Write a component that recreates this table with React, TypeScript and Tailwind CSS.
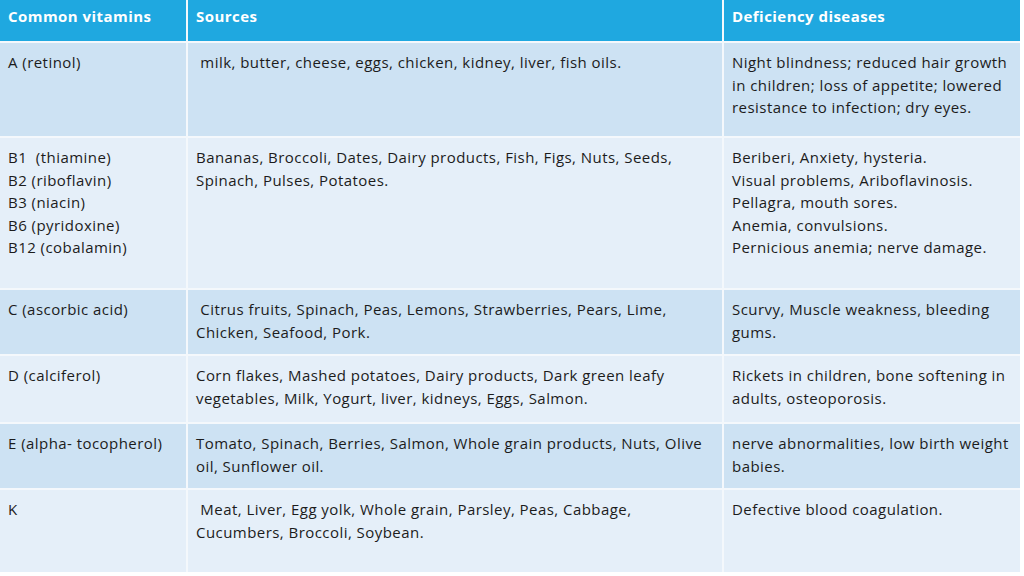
import React from 'react';

type Row = {
  vitamin: string[];
  sources: string[];
  diseases: string[];
  tone: 'dark' | 'light';
};

const rows: Row[] = [
  {
    vitamin: ['A (retinol)'],
    sources: [' milk, butter, cheese, eggs, chicken, kidney, liver, fish oils.'],
    diseases: [
      'Night blindness; reduced hair growth',
      'in children; loss of appetite; lowered',
      'resistance to infection; dry eyes.',
    ],
    tone: 'dark',
  },
  {
    vitamin: ['B1  (thiamine)', 'B2 (riboflavin)', 'B3 (niacin)', 'B6 (pyridoxine)', 'B12 (cobalamin)'],
    sources: ['Bananas, Broccoli, Dates, Dairy products, Fish, Figs, Nuts, Seeds,', 'Spinach, Pulses, Potatoes.'],
    diseases: [
      'Beriberi, Anxiety, hysteria.',
      'Visual problems, Ariboflavinosis.',
      'Pellagra, mouth sores.',
      'Anemia, convulsions.',
      'Pernicious anemia; nerve damage.',
    ],
    tone: 'light',
  },
  {
    vitamin: ['C (ascorbic acid)'],
    sources: [' Citrus fruits, Spinach, Peas, Lemons, Strawberries, Pears, Lime,', 'Chicken, Seafood, Pork.'],
    diseases: ['Scurvy, Muscle weakness, bleeding', 'gums.'],
    tone: 'dark',
  },
  {
    vitamin: ['D (calciferol)'],
    sources: ['Corn flakes, Mashed potatoes, Dairy products, Dark green leafy', 'vegetables, Milk, Yogurt, liver, kidneys, Eggs, Salmon.'],
    diseases: ['Rickets in children, bone softening in', 'adults, osteoporosis.'],
    tone: 'light',
  },
  {
    vitamin: ['E (alpha- tocopherol)'],
    sources: ['Tomato, Spinach, Berries, Salmon, Whole grain products, Nuts, Olive', 'oil, Sunflower oil.'],
    diseases: ['nerve abnormalities, low birth weight', 'babies.'],
    tone: 'dark',
  },
  {
    vitamin: ['K'],
    sources: [' Meat, Liver, Egg yolk, Whole grain, Parsley, Peas, Cabbage,', 'Cucumbers, Broccoli, Soybean.'],
    diseases: ['Defective blood coagulation.'],
    tone: 'light',
  },
];

const Cell = ({ lines, tone }: { lines: string[]; tone: 'dark' | 'light' }) => (
  <div className={`${tone === 'dark' ? 'bg-[#cde2f3]' : 'bg-[#e5eff9]'} pl-2 pr-1 pt-[8px] whitespace-pre overflow-hidden`}>
    {lines.map((l, i) => (
      <div key={i} className="h-[22.5px] leading-[22.5px]">
        {l}
      </div>
    ))}
  </div>
);

export default function App() {
  return (
    <div
      className="w-[1024px] h-[576px] bg-white overflow-hidden text-[15px] tracking-[0.45px] text-[#1c1c1c]"
      style={{ fontFamily: '"Open Sans", Lato, sans-serif' }}
    >
      <div className="grid grid-cols-[186px_534px_296px] grid-rows-[41px_93px_150px_64px_66px_64px_82px] gap-[2px] bg-[#f4f8fc] w-[1020px]">
        {/* HEADER */}
        <div className="bg-[#1fa8e0] text-white font-bold pl-2 pt-[5px] leading-[22px]">Common vitamins</div>
        <div className="bg-[#1fa8e0] text-white font-bold pl-2 pt-[5px] leading-[22px]">Sources</div>
        <div className="bg-[#1fa8e0] text-white font-bold pl-2 pt-[5px] leading-[22px]">Deficiency diseases</div>

        {rows.map((r, i) => (
          <React.Fragment key={i}>
            <Cell lines={r.vitamin} tone={r.tone} />
            <Cell lines={r.sources} tone={r.tone} />
            <Cell lines={r.diseases} tone={r.tone} />
          </React.Fragment>
        ))}
      </div>
    </div>
  );
}
